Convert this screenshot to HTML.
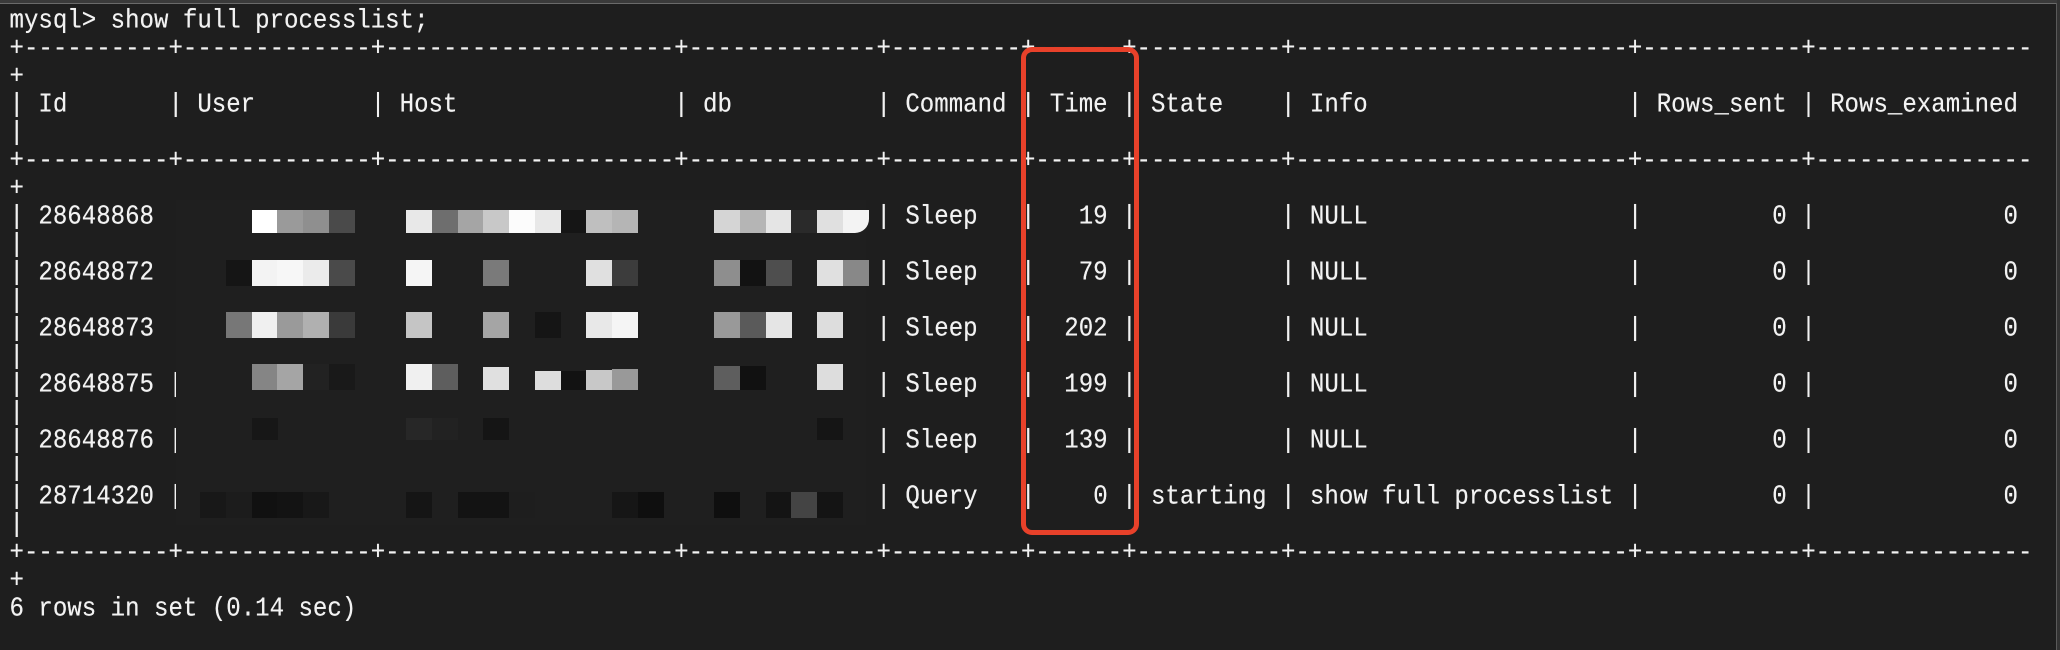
<!DOCTYPE html>
<html><head><meta charset="utf-8"><style>
html,body{margin:0;padding:0;background:#1e1e1e;}
body{width:2060px;height:650px;position:relative;overflow:hidden;}
.top{position:absolute;left:0;top:0;width:2060px;height:3px;background:#3a3a3a;}
.top2{position:absolute;left:0;top:3px;width:2056px;height:1px;background:#6a6a6a;}
.rt{position:absolute;left:2056px;top:3px;width:1px;height:647px;background:#5a5a5a;}
.rt2{position:absolute;left:2057px;top:0;width:3px;height:650px;background:#333;}
.w{position:absolute;left:0;top:3px;width:2060px;height:647px;}
.l{position:absolute;left:9.5px;height:28px;line-height:28px;font-family:"Liberation Mono",monospace;font-size:24.08px;color:#f2f2f2;white-space:pre;transform:scaleY(1.1);width:2040px;text-shadow:0 0 0.4px #f2f2f2;}
.l span{position:absolute;top:0;}
.b{position:absolute;width:26px;}
.box{position:absolute;left:1021px;top:47px;width:108px;height:478px;border:5px solid #e8412a;border-radius:11px;}
</style></head><body>
<div class="top"></div><div class="top2"></div><div class="rt"></div><div class="rt2"></div>
<div class="w">
<div class="l" style="top:5px"><span style="left:0ch">mysql&gt; show full processlist;</span></div>

<div class="l" style="top:33px"><span style="left:0ch">+----------</span><span style="left:11ch">+-------------</span><span style="left:25ch">+--------------------</span><span style="left:46ch">+-------------</span><span style="left:60ch">+---------</span><span style="left:70ch">+------</span><span style="left:77ch">+----------</span><span style="left:88ch">+-----------------------</span><span style="left:112ch">+-----------</span><span style="left:124ch">+---------------</span></div>
<div class="l" style="top:61px"><span style="left:0ch">+</span></div>
<div class="l" style="top:89px"><span style="left:0ch">| Id</span><span style="left:11ch">| User</span><span style="left:25ch">| Host</span><span style="left:46ch">| db</span><span style="left:60ch">| Command</span><span style="left:70ch">| Time</span><span style="left:77ch">| State</span><span style="left:88ch">| Info</span><span style="left:112ch">| Rows_sent</span><span style="left:124ch">| Rows_examined</span></div>
<div class="l" style="top:117px"><span style="left:0ch">|</span></div>
<div class="l" style="top:145px"><span style="left:0ch">+----------</span><span style="left:11ch">+-------------</span><span style="left:25ch">+--------------------</span><span style="left:46ch">+-------------</span><span style="left:60ch">+---------</span><span style="left:70ch">+------</span><span style="left:77ch">+----------</span><span style="left:88ch">+-----------------------</span><span style="left:112ch">+-----------</span><span style="left:124ch">+---------------</span></div>
<div class="l" style="top:173px"><span style="left:0ch">+</span></div>

<div class="l" style="top:201px"><span style="left:0ch">| 28648868</span><span style="left:60ch">| Sleep</span><span style="left:70ch">|</span><span style="left:74ch">19</span><span style="left:77ch">|</span><span style="left:88ch">| NULL</span><span style="left:112ch">|</span><span style="left:122ch">0</span><span style="left:124ch">|</span><span style="left:138ch">0</span></div>
<div class="l" style="top:229px"><span style="left:0ch">|</span></div>
<div class="l" style="top:257px"><span style="left:0ch">| 28648872</span><span style="left:60ch">| Sleep</span><span style="left:70ch">|</span><span style="left:74ch">79</span><span style="left:77ch">|</span><span style="left:88ch">| NULL</span><span style="left:112ch">|</span><span style="left:122ch">0</span><span style="left:124ch">|</span><span style="left:138ch">0</span></div>
<div class="l" style="top:285px"><span style="left:0ch">|</span></div>
<div class="l" style="top:313px"><span style="left:0ch">| 28648873</span><span style="left:60ch">| Sleep</span><span style="left:70ch">|</span><span style="left:73ch">202</span><span style="left:77ch">|</span><span style="left:88ch">| NULL</span><span style="left:112ch">|</span><span style="left:122ch">0</span><span style="left:124ch">|</span><span style="left:138ch">0</span></div>
<div class="l" style="top:341px"><span style="left:0ch">|</span></div>
<div class="l" style="top:369px"><span style="left:0ch">| 28648875</span><span style="left:11ch">|</span><span style="left:60ch">| Sleep</span><span style="left:70ch">|</span><span style="left:73ch">199</span><span style="left:77ch">|</span><span style="left:88ch">| NULL</span><span style="left:112ch">|</span><span style="left:122ch">0</span><span style="left:124ch">|</span><span style="left:138ch">0</span></div>
<div class="l" style="top:397px"><span style="left:0ch">|</span></div>
<div class="l" style="top:425px"><span style="left:0ch">| 28648876</span><span style="left:11ch">|</span><span style="left:60ch">| Sleep</span><span style="left:70ch">|</span><span style="left:73ch">139</span><span style="left:77ch">|</span><span style="left:88ch">| NULL</span><span style="left:112ch">|</span><span style="left:122ch">0</span><span style="left:124ch">|</span><span style="left:138ch">0</span></div>
<div class="l" style="top:453px"><span style="left:0ch">|</span></div>
<div class="l" style="top:481px"><span style="left:0ch">| 28714320</span><span style="left:11ch">|</span><span style="left:60ch">| Query</span><span style="left:70ch">|</span><span style="left:75ch">0</span><span style="left:77ch">| starting</span><span style="left:88ch">| show full processlist</span><span style="left:112ch">|</span><span style="left:122ch">0</span><span style="left:124ch">|</span><span style="left:138ch">0</span></div>
<div class="l" style="top:509px"><span style="left:0ch">|</span></div>
<div class="l" style="top:537px"><span style="left:0ch">+----------</span><span style="left:11ch">+-------------</span><span style="left:25ch">+--------------------</span><span style="left:46ch">+-------------</span><span style="left:60ch">+---------</span><span style="left:70ch">+------</span><span style="left:77ch">+----------</span><span style="left:88ch">+-----------------------</span><span style="left:112ch">+-----------</span><span style="left:124ch">+---------------</span></div>
<div class="l" style="top:565px"><span style="left:0ch">+</span></div>
<div class="l" style="top:593px"><span style="left:0ch">6 rows in set (0.14 sec)</span></div>
</div>

<div style="position:absolute;left:176px;top:200px;width:690px;height:325px;background:#1f1f1f;"></div>

<div class="b" style="left:252px;top:210px;height:23px;background:#fff"></div>
<div class="b" style="left:277px;top:210px;height:23px;background:#9a9a9a"></div>
<div class="b" style="left:303px;top:210px;height:23px;background:#8f8f8f"></div>
<div class="b" style="left:329px;top:210px;height:23px;background:#4a4a4a"></div>
<div class="b" style="left:406px;top:210px;height:23px;background:#e8e8e8"></div>
<div class="b" style="left:432px;top:210px;height:23px;background:#6e6e6e"></div>
<div class="b" style="left:458px;top:210px;height:23px;background:#a5a5a5"></div>
<div class="b" style="left:483px;top:210px;height:23px;background:#c8c8c8"></div>
<div class="b" style="left:509px;top:210px;height:23px;background:#fcfcfc"></div>
<div class="b" style="left:535px;top:210px;height:23px;background:#e8e8e8"></div>
<div class="b" style="left:561px;top:210px;height:23px;background:#151515"></div>
<div class="b" style="left:586px;top:210px;height:23px;background:#bfbfbf"></div>
<div class="b" style="left:612px;top:210px;height:23px;background:#b5b5b5"></div>
<div class="b" style="left:714px;top:210px;height:23px;background:#d5d5d5"></div>
<div class="b" style="left:740px;top:210px;height:23px;background:#b5b5b5"></div>
<div class="b" style="left:766px;top:210px;height:23px;background:#e5e5e5"></div>
<div class="b" style="left:791px;top:210px;height:23px;background:#2a2a2a"></div>
<div class="b" style="left:817px;top:210px;height:23px;background:#e0e0e0"></div>
<div class="b" style="left:843px;top:210px;height:23px;background:#f3f3f3;border-bottom-right-radius:14px"></div>
<div class="b" style="left:226px;top:260px;height:26px;background:#151515"></div>
<div class="b" style="left:252px;top:260px;height:26px;background:#f3f3f3"></div>
<div class="b" style="left:277px;top:260px;height:26px;background:#f7f7f7"></div>
<div class="b" style="left:303px;top:260px;height:26px;background:#ebebeb"></div>
<div class="b" style="left:329px;top:260px;height:26px;background:#4a4a4a"></div>
<div class="b" style="left:406px;top:260px;height:26px;background:#f5f5f5"></div>
<div class="b" style="left:483px;top:260px;height:26px;background:#7a7a7a"></div>
<div class="b" style="left:586px;top:260px;height:26px;background:#e0e0e0"></div>
<div class="b" style="left:612px;top:260px;height:26px;background:#3c3c3c"></div>
<div class="b" style="left:714px;top:260px;height:26px;background:#8e8e8e"></div>
<div class="b" style="left:740px;top:260px;height:26px;background:#121212"></div>
<div class="b" style="left:766px;top:260px;height:26px;background:#4e4e4e"></div>
<div class="b" style="left:817px;top:260px;height:26px;background:#e0e0e0"></div>
<div class="b" style="left:843px;top:260px;height:26px;background:#888"></div>
<div class="b" style="left:226px;top:312px;height:26px;background:#777"></div>
<div class="b" style="left:252px;top:312px;height:26px;background:#f0f0f0"></div>
<div class="b" style="left:277px;top:312px;height:26px;background:#9a9a9a"></div>
<div class="b" style="left:303px;top:312px;height:26px;background:#b0b0b0"></div>
<div class="b" style="left:329px;top:312px;height:26px;background:#3a3a3a"></div>
<div class="b" style="left:406px;top:312px;height:26px;background:#c5c5c5"></div>
<div class="b" style="left:483px;top:312px;height:26px;background:#a5a5a5"></div>
<div class="b" style="left:535px;top:312px;height:26px;background:#151515"></div>
<div class="b" style="left:586px;top:312px;height:26px;background:#e8e8e8"></div>
<div class="b" style="left:612px;top:312px;height:26px;background:#f5f5f5"></div>
<div class="b" style="left:714px;top:312px;height:26px;background:#999"></div>
<div class="b" style="left:740px;top:312px;height:26px;background:#5a5a5a"></div>
<div class="b" style="left:766px;top:312px;height:26px;background:#e5e5e5"></div>
<div class="b" style="left:817px;top:312px;height:26px;background:#ddd"></div>
<div class="b" style="left:252px;top:364px;height:26px;background:#858585"></div>
<div class="b" style="left:277px;top:364px;height:26px;background:#a5a5a5"></div>
<div class="b" style="left:303px;top:364px;height:26px;background:#222"></div>
<div class="b" style="left:329px;top:364px;height:26px;background:#191919"></div>
<div class="b" style="left:406px;top:364px;height:26px;background:#f0f0f0"></div>
<div class="b" style="left:432px;top:364px;height:26px;background:#5e5e5e"></div>
<div class="b" style="left:483px;top:367px;height:23px;background:#e0e0e0"></div>
<div class="b" style="left:535px;top:371px;height:19px;background:#ddd"></div>
<div class="b" style="left:561px;top:371px;height:19px;background:#121212"></div>
<div class="b" style="left:586px;top:370px;height:20px;background:#c8c8c8"></div>
<div class="b" style="left:612px;top:369px;height:21px;background:#999"></div>
<div class="b" style="left:714px;top:366px;height:24px;background:#5e5e5e"></div>
<div class="b" style="left:740px;top:366px;height:24px;background:#111"></div>
<div class="b" style="left:817px;top:364px;height:26px;background:#ddd"></div>
<div class="b" style="left:252px;top:418px;height:22px;background:#171717"></div>
<div class="b" style="left:406px;top:418px;height:22px;background:#272727"></div>
<div class="b" style="left:432px;top:418px;height:22px;background:#222"></div>
<div class="b" style="left:483px;top:418px;height:22px;background:#151515"></div>
<div class="b" style="left:817px;top:418px;height:22px;background:#151515"></div>
<div class="b" style="left:200px;top:492px;height:26px;background:#181818"></div>
<div class="b" style="left:226px;top:492px;height:26px;background:#1c1c1c"></div>
<div class="b" style="left:252px;top:492px;height:26px;background:#111"></div>
<div class="b" style="left:277px;top:492px;height:26px;background:#131313"></div>
<div class="b" style="left:303px;top:492px;height:26px;background:#181818"></div>
<div class="b" style="left:406px;top:492px;height:26px;background:#151515"></div>
<div class="b" style="left:458px;top:492px;height:26px;background:#131313"></div>
<div class="b" style="left:483px;top:492px;height:26px;background:#131313"></div>
<div class="b" style="left:509px;top:492px;height:26px;background:#1e1e1e"></div>
<div class="b" style="left:612px;top:492px;height:26px;background:#161616"></div>
<div class="b" style="left:638px;top:492px;height:26px;background:#0f0f0f"></div>
<div class="b" style="left:714px;top:492px;height:26px;background:#0f0f0f"></div>
<div class="b" style="left:766px;top:492px;height:26px;background:#141414"></div>
<div class="b" style="left:791px;top:492px;height:26px;background:#444"></div>
<div class="b" style="left:817px;top:492px;height:26px;background:#141414"></div>

<div class="box"></div>
</body></html>
